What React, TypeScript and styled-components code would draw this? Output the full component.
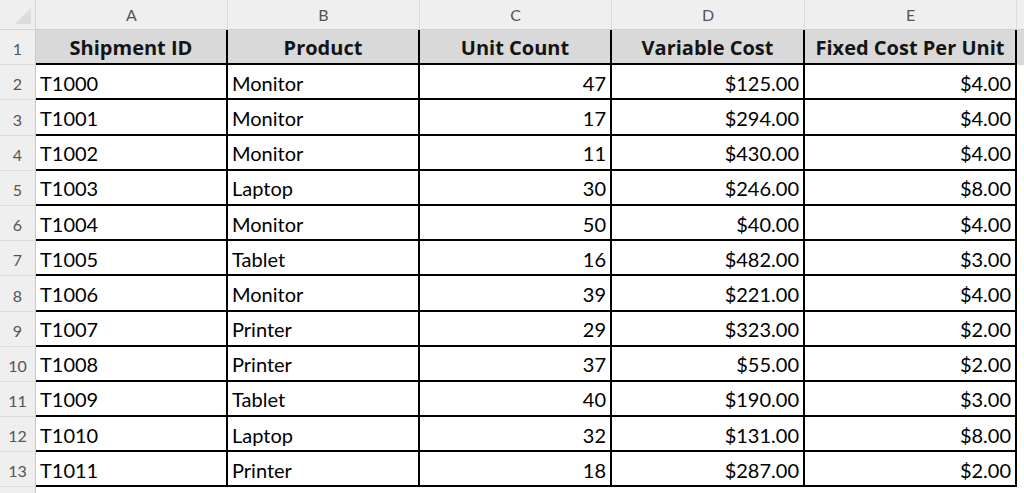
import React from 'react';
import styled, { createGlobalStyle } from 'styled-components';

const GlobalStyle = createGlobalStyle`
  html, body {
    margin: 0;
    padding: 0;
    background: #ffffff;
  }
`;

const COLUMNS = ['A', 'B', 'C', 'D', 'E'];
const COL_WIDTHS = '36px 192px 192px 192px 193px 212px 1fr';
const ROW_HEIGHT = 35.2;

const HEADERS = ['Shipment ID', 'Product', 'Unit Count', 'Variable Cost', 'Fixed Cost Per Unit'];

const ROWS: [string, string, number, string, string][] = [
  ['T1000', 'Monitor', 47, '$125.00', '$4.00'],
  ['T1001', 'Monitor', 17, '$294.00', '$4.00'],
  ['T1002', 'Monitor', 11, '$430.00', '$4.00'],
  ['T1003', 'Laptop', 30, '$246.00', '$8.00'],
  ['T1004', 'Monitor', 50, '$40.00', '$4.00'],
  ['T1005', 'Tablet', 16, '$482.00', '$3.00'],
  ['T1006', 'Monitor', 39, '$221.00', '$4.00'],
  ['T1007', 'Printer', 29, '$323.00', '$2.00'],
  ['T1008', 'Printer', 37, '$55.00', '$2.00'],
  ['T1009', 'Tablet', 40, '$190.00', '$3.00'],
  ['T1010', 'Laptop', 32, '$131.00', '$8.00'],
  ['T1011', 'Printer', 18, '$287.00', '$2.00'],
];

const Sheet = styled.div`
  display: grid;
  grid-template-columns: ${COL_WIDTHS};
  grid-template-rows: 30px repeat(13, ${ROW_HEIGHT}px) 1fr;
  width: 1024px;
  height: 493px;
  overflow: hidden;
  font-family: Lato, 'Liberation Sans', sans-serif;
  background: #ffffff;
`;

const Corner = styled.div`
  position: relative;
  background: #efefef;
  border-right: 1px solid #d4d4d4;
  border-bottom: 1px solid #d4d4d4;

  &::after {
    content: '';
    position: absolute;
    right: 4px;
    bottom: 5px;
    width: 0;
    height: 0;
    border-left: 16px solid transparent;
    border-bottom: 16px solid #dcdcdc;
  }
`;

const ColHeader = styled.div`
  display: flex;
  align-items: center;
  justify-content: center;
  background: #efefef;
  border-right: 1px solid #dcdcdc;
  border-bottom: 1px solid #d0d0d0;
  color: #555555;
  font-size: 16px;
`;

const RowHeader = styled.div`
  display: flex;
  align-items: flex-end;
  justify-content: center;
  padding-bottom: 6px;
  box-sizing: border-box;
  background: #efefef;
  border-right: 1px solid #c8c8c8;
  border-bottom: 1px solid #dcdcdc;
  color: #555555;
  font-size: 16px;
`;

const Cell = styled.div<{ $head?: boolean; $align?: 'left' | 'right' | 'center'; $edge?: boolean }>`
  display: flex;
  align-items: center;
  justify-content: ${(p) =>
    p.$align === 'right' ? 'flex-end' : p.$align === 'center' ? 'center' : 'flex-start'};
  box-sizing: border-box;
  padding: 2px 4px 0 4px;
  background: ${(p) => (p.$head ? '#d9d9d9' : '#ffffff')};
  border-right: ${(p) => (p.$edge ? 'none' : '2px solid #000000')};
  border-bottom: ${(p) => (p.$edge ? 'none' : '2px solid #000000')};
  color: ${(p) => (p.$head ? '#141414' : '#000000')};
  font-family: ${(p) => (p.$head ? "'Open Sans', Lato, sans-serif" : 'inherit')};
  font-size: ${(p) => (p.$head ? '20px' : '20px')};
  font-weight: ${(p) => (p.$head ? 700 : 400)};
  white-space: nowrap;
  overflow: hidden;
`;

const Spare = styled.div`
  background: #ffffff;
`;

const App: React.FC = () => {
  return (
    <>
      <GlobalStyle />
      <Sheet>
        <Corner />
        {COLUMNS.map((c) => (
          <ColHeader key={c}>{c}</ColHeader>
        ))}
        <ColHeader />

        <RowHeader>1</RowHeader>
        {HEADERS.map((h) => (
          <Cell key={h} $head $align='center'>
            {h}
          </Cell>
        ))}
        <Cell $head $edge />

        {ROWS.map((r, i) => (
          <React.Fragment key={r[0]}>
            <RowHeader>{i + 2}</RowHeader>
            <Cell>{r[0]}</Cell>
            <Cell>{r[1]}</Cell>
            <Cell $align='right'>{r[2]}</Cell>
            <Cell $align='right'>{r[3]}</Cell>
            <Cell $align='right'>{r[4]}</Cell>
            <Cell $edge />
          </React.Fragment>
        ))}

        <RowHeader />
        <Spare />
        <Spare />
        <Spare />
        <Spare />
        <Spare />
        <Spare />
      </Sheet>
    </>
  );
};

export default App;
